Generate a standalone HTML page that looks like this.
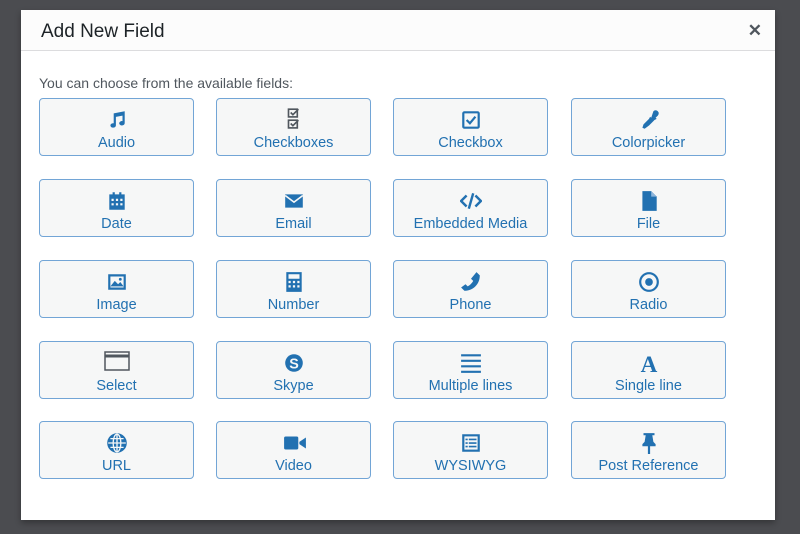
<!DOCTYPE html>
<html><head><meta charset="utf-8"><style>
*{margin:0;padding:0;box-sizing:border-box}
body{width:800px;height:534px;background:#4b4c50;position:relative;overflow:hidden;font-family:"Liberation Sans",sans-serif}
.modal{position:absolute;left:21px;top:10px;width:754px;height:510px;background:#fff;box-shadow:0 3px 6px rgba(0,0,0,.3)}
.hd{height:41px;background:#fcfcfc;border-bottom:1px solid #dcdcde;position:relative}
.hd h1{position:absolute;left:20px;top:11px;font-size:19px;font-weight:normal;color:#1d2327}
.x{position:absolute;right:13px;top:11px;font-size:17px;font-weight:bold;color:#50575e}
.lbl{position:absolute;left:18px;top:65px;font-size:14px;color:#50575e}
.b{position:absolute;width:155px;height:58px;border:1px solid #72a5d6;border-radius:4px;background:#f6f7f7;color:#2271b1;text-align:center}
.b svg{position:absolute;left:66px;top:10px;width:22px;height:22px}
.b span{position:absolute;left:0;right:0;top:36px;font-size:14.5px}
</style></head><body>
<div class="modal">
<div class="hd"><h1>Add New Field</h1><div class="x">✕</div></div>
<div class="lbl">You can choose from the available fields:</div>
</div>
<div class="b" style="left:39px;top:98px"><svg viewBox="0 0 20 20" fill="#2271b1"><path d="M7 4l10-2v11a2.5 2 0 1 1-2-2V6l-6 1.2V15a2.5 2 0 1 1-2-2z"/></svg><span>Audio</span></div>
<div class="b" style="left:216px;top:98px"><svg viewBox="0 0 20 20" fill="none" stroke="#50575e" stroke-width="1.5" style="top:6px;height:26px"><rect x="5" y="2" width="8" height="7"/><rect x="5" y="12" width="8" height="7"/><path d="M7 5l2 2 5-5M7 15l2 2 5-5"/></svg><span>Checkboxes</span></div>
<div class="b" style="left:393px;top:98px"><svg viewBox="0 0 20 20" fill="none" stroke="#2271b1" stroke-width="2"><rect x="3" y="3" width="14" height="14" rx="1"/><path d="M6 10l3 3 5-6"/></svg><span>Checkbox</span></div>
<div class="b" style="left:571px;top:98px"><svg viewBox="0 0 20 20" fill="#2271b1"><path d="M14 2a2.5 2.5 0 0 1 4 4l-2 2 1 1-2 1-5 5-4 3-2-1 1-3 5-5 1-2 1 1z"/></svg><span>Colorpicker</span></div>

<div class="b" style="left:39px;top:179px"><svg viewBox="0 0 20 20" fill="#2271b1"><path d="M3 4h14v14H3zM6 2h2v3H6zM12 2h2v3h-2z"/><path fill="#f6f7f7" d="M5 8h2v2H5zM9 8h2v2H9zM13 8h2v2h-2zM5 12h2v2H5zM9 12h2v2H9zM13 12h2v2h-2z"/></svg><span>Date</span></div>
<div class="b" style="left:216px;top:179px"><svg viewBox="0 0 20 20" fill="#2271b1"><path d="M2 4h16v12H2z"/><path d="M2 5l8 6 8-6" stroke="#f6f7f7" stroke-width="1.5" fill="none"/></svg><span>Email</span></div>
<div class="b" style="left:393px;top:179px"><svg viewBox="0 0 20 20" fill="none" stroke="#2271b1" stroke-width="2.2"><path d="M6 5L1 10l5 5M14 5l5 5-5 5M12 3L8 17"/></svg><span>Embedded Media</span></div>
<div class="b" style="left:571px;top:179px"><svg viewBox="0 0 20 20" fill="#2271b1"><path d="M4 1h8l5 5v13H4z"/><path d="M12 1v5h5" fill="#8fb6dc"/></svg><span>File</span></div>

<div class="b" style="left:39px;top:260px"><svg viewBox="0 0 20 20" fill="#2271b1"><path d="M2 3h16v14H2z"/><path fill="#f6f7f7" d="M4 5h12v10H4z"/><path d="M4 14l4-5 3 3 2-2 3 4z"/><circle cx="13" cy="7.5" r="1.3"/></svg><span>Image</span></div>
<div class="b" style="left:216px;top:260px"><svg viewBox="0 0 20 20" fill="#2271b1"><path d="M3 1h14v18H3z"/><path fill="#f6f7f7" d="M5 3h10v4H5zM5 9h2v2H5zM9 9h2v2H9zM13 9h2v2h-2zM5 13h2v2H5zM9 13h2v2H9zM13 13h2v2h-2z"/></svg><span>Number</span></div>
<div class="b" style="left:393px;top:260px"><svg viewBox="0 0 20 20" fill="#2271b1"><path d="M15 1l3 3c0 8-6 14-14 14l-3-3 4-3 2 2c2-1 4-3 5-5l-2-2z"/></svg><span>Phone</span></div>
<div class="b" style="left:571px;top:260px"><svg viewBox="0 0 20 20" fill="#2271b1"><circle cx="10" cy="10" r="8" fill="none" stroke="#2271b1" stroke-width="2"/><circle cx="10" cy="10" r="3.5"/></svg><span>Radio</span></div>

<div class="b" style="left:39px;top:341px"><svg viewBox="0 0 26 20" style="left:64px;width:26px;top:8px" fill="none" stroke="#50575e" stroke-width="1.5"><rect x="1" y="1" width="24" height="18"/><path d="M1 5h24" stroke-width="3"/></svg><span>Select</span></div>
<div class="b" style="left:216px;top:341px"><svg viewBox="0 0 20 20" fill="#2271b1"><circle cx="10" cy="10" r="8"/><text x="10" y="15" font-size="13" font-weight="bold" fill="#f6f7f7" text-anchor="middle" font-family="Liberation Sans">S</text></svg><span>Skype</span></div>
<div class="b" style="left:393px;top:341px"><svg viewBox="0 0 20 20" fill="#2271b1"><path d="M1 2h18v2H1zM1 7h18v2H1zM1 12h18v2H1zM1 17h18v2H1z"/></svg><span>Multiple lines</span></div>
<div class="b" style="left:571px;top:341px"><svg viewBox="0 0 20 20"><text x="10" y="18" font-size="21" font-weight="bold" fill="#2271b1" text-anchor="middle" font-family="Liberation Serif">A</text></svg><span>Single line</span></div>

<div class="b" style="left:39px;top:421px"><svg viewBox="0 0 20 20" fill="none" stroke="#2271b1" stroke-width="1.8"><circle cx="10" cy="10" r="8" fill="#2271b1"/><path d="M2 10h16M10 2v16M4 6h12M4 14h12" stroke="#f6f7f7" stroke-width="1.2"/><ellipse cx="10" cy="10" rx="3.5" ry="8" stroke="#f6f7f7" stroke-width="1.2"/></svg><span>URL</span></div>
<div class="b" style="left:216px;top:421px"><svg viewBox="0 0 22 20" style="width:24px" fill="#2271b1"><rect x="1" y="4" width="13" height="12" rx="1.5"/><path d="M15 9l6-4v10l-6-4z"/></svg><span>Video</span></div>
<div class="b" style="left:393px;top:421px"><svg viewBox="0 0 20 20" fill="#2271b1"><path d="M2 2h16v16H2z"/><path fill="#f6f7f7" d="M4 4h12v12H4z"/><path d="M5 6h2v1.5H5zM8 6h7v1.5H8zM5 9.3h2v1.5H5zM8 9.3h7v1.5H8zM5 12.5h2V14H5zM8 12.5h7V14H8z"/></svg><span>WYSIWYG</span></div>
<div class="b" style="left:571px;top:421px"><svg viewBox="0 0 20 20" fill="#2271b1" style="top:9px;height:24px"><path d="M5 1h10v2h-2l1 6 2 2v2H4v-2l2-2 1-6H5zM9 13h2v7H9z"/></svg><span>Post Reference</span></div>
</body></html>
